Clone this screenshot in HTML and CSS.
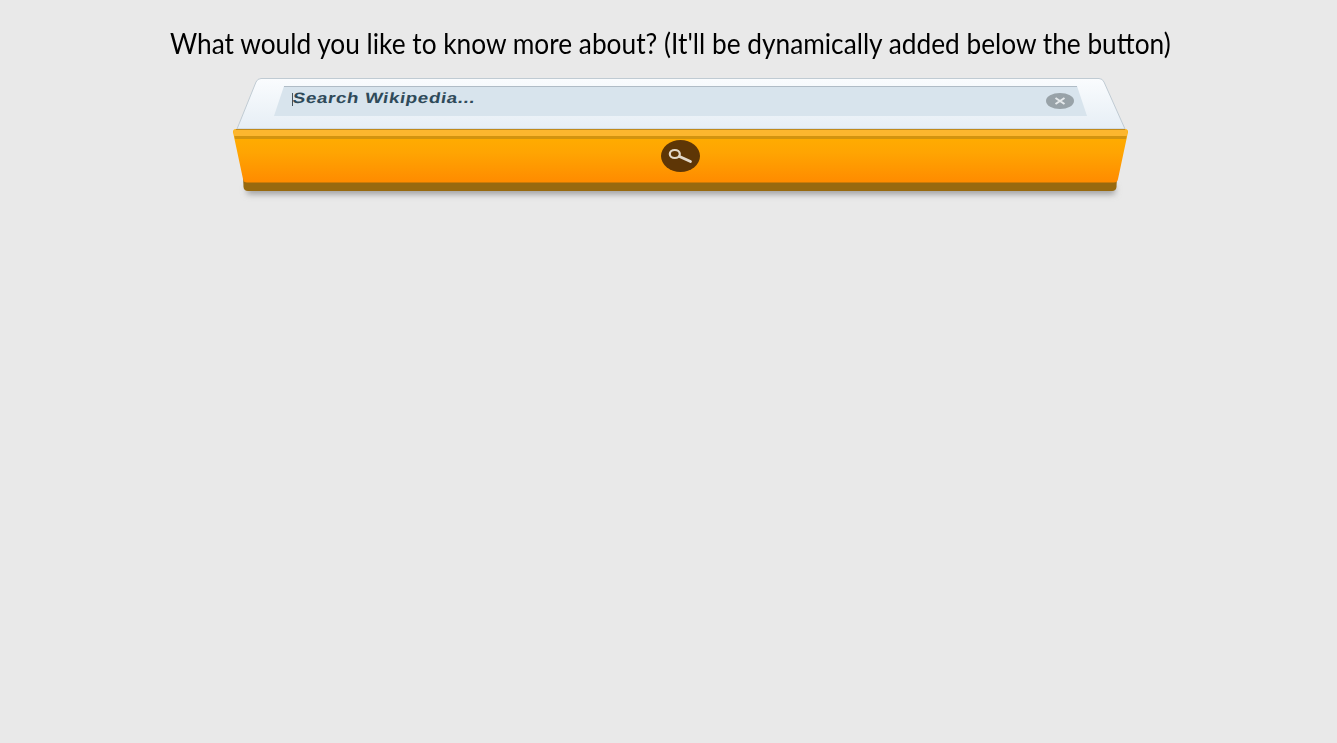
FILE: index.html
```html
<!DOCTYPE html>
<html lang="en">
<head>
    <meta charset="UTF-8">
    <title>Wikipedia search</title>
    <link rel="stylesheet" href="styles.css">
</head>
<body>
    <h1 class="title">What would you like to know more about? (It'll be dynamically added below the button)</h1>

    <!-- search box -->
    <div class="search-bar">
        <svg class="bar-shape" width="896" height="124" viewBox="0 0 896 124" aria-hidden="true">
            <defs>
                <linearGradient id="lid-fill" x1="0" y1="0" x2="0" y2="1">
                    <stop offset="0" stop-color="#fafcfe"/>
                    <stop offset="1" stop-color="#e6eef5"/>
                </linearGradient>
                <linearGradient id="front-fill" x1="0" y1="0" x2="0" y2="1">
                    <stop offset="0" stop-color="#ffb000"/>
                    <stop offset="0.45" stop-color="#ffa402"/>
                    <stop offset="1" stop-color="#ff8b00"/>
                </linearGradient>
                <filter id="soft" x="-5%" y="-100%" width="110%" height="300%">
                    <feGaussianBlur stdDeviation="3"/>
                </filter>
            </defs>
            <rect x="14" y="108" width="868" height="8" fill="#9a9a9a" filter="url(#soft)"/>
            <path d="M4 51 L23 4 Q24.500 .5 28 .5 L866 .5 Q869.500 .5 871 4 L892 51 Z" fill="url(#lid-fill)" stroke="#c0cbd3"/>
            <path d="M51 8 H844 L854 38 H41 Z" fill="#d8e4ed"/>
            <path d="M51 8.500 H844" stroke="#b0bcc6"/>
            <path d="M10 98 H884 L883.500 109 Q883 113 879 113 H15 Q11 113 10.500 109 Z" fill="#97690f"/>
            <path d="M0 54 Q0 51 3 51 H892 Q895 51 895 54 L885 101 Q884.500 104.500 881 104.500 H14 Q10.500 104.500 10 101 Z" fill="url(#front-fill)"/>
            <path d="M.5 54 Q.5 51.500 3 51.500 H892 Q894.500 51.500 894.500 54 L893.500 58 H1.500 Z" fill="#fdb62e"/>
            <path d="M1.500 58 H893.500 L893 61 H2 Z" fill="#d3930f"/>
            <path d="M3 51.500 H892" stroke="#c08a1c"/>
        </svg>

        <div class="lid">
            <div class="search-field">
                <span class="caret"></span>
                <span class="placeholder">Search Wikipedia...</span>
                <button class="clear-btn" aria-label="Clear">
                    <svg width="12" height="8" viewBox="0 0 12 8"><path d="M1.500 1 L10.500 7 M10.500 1 L1.500 7" stroke="#e6eaec" stroke-width="2"/></svg>
                </button>
            </div>
        </div>

        <div class="front">
            <button class="search-btn" aria-label="Search">
                <svg width="26" height="18" viewBox="0 0 26 18">
                    <ellipse cx="6.800" cy="7" rx="5" ry="4" fill="none" stroke="#e2d8ca" stroke-width="2.200"/>
                    <path d="M11.500 9.500 L22.500 14.500" stroke="#e2d8ca" stroke-width="2.800" stroke-linecap="round"/>
                </svg>
            </button>
        </div>
    </div>
</body>
</html>
```

FILE: styles.css
```css
body {
    margin: 0;
    height: 743px;
    overflow: hidden;
    background-color: #e9e9e9;
}
.title {
    margin: 0;
    padding: 25px 0 0 4px;
    height: 78px;
    box-sizing: border-box;
    font-family: "Lato", sans-serif;
    font-size: 28px;
    line-height: 36px;
    font-weight: 400;
    white-space: nowrap;
    text-align: center;
    color: #000;
    transform: scaleX(0.938);
}
.search-bar {
    position: relative;
    width: 896px;
    height: 124px;
    margin-left: 233px;
}
.bar-shape {
    position: absolute;
    top: 0;
    left: 0;
}
.lid {
    position: relative;
    height: 51px;
    box-sizing: border-box;
    padding: 8px 55px 0 59px;
}
.search-field {
    display: flex;
    align-items: center;
    height: 30px;
}
.caret {
    width: 1px;
    height: 13px;
    margin-top: -4px;
    background-color: #44525a;
}
.placeholder {
    margin-top: -7px;
    font-family: "Liberation Sans", Arial, sans-serif;
    font-size: 15px;
    font-weight: bold;
    letter-spacing: 0.5px;
    color: #2f4a5a;
    transform: scaleX(1.25) skewX(-8deg);
    transform-origin: left center;
}
.clear-btn {
    display: flex;
    align-items: center;
    justify-content: center;
    width: 28px;
    height: 16px;
    margin: 0 0 0 auto;
    padding: 0;
    border: none;
    border-radius: 50%;
    background-color: #98a2a8;
}
.front {
    position: relative;
    display: flex;
    justify-content: center;
    height: 54px;
    padding-top: 11px;
    box-sizing: border-box;
}
.search-btn {
    display: flex;
    align-items: center;
    justify-content: center;
    width: 39px;
    height: 32px;
    margin-left: -1px;
    padding: 0;
    border: none;
    border-radius: 50%;
    background-color: #5e3606;
}
```
